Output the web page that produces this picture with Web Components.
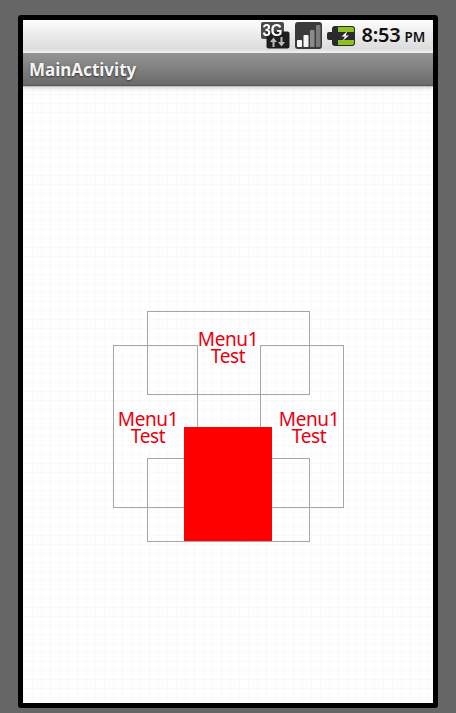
<!DOCTYPE html>
<html><head><meta charset="utf-8"><style>
html,body{margin:0;padding:0;background:#666;width:456px;height:713px;overflow:hidden}
</style></head><body>
<phone-frame>
  <status-bar slot="status"></status-bar>
  <title-bar slot="title">MainActivity</title-bar>
  <menu-canvas slot="content">
    <outline-box style="left:124px;top:226px;width:161px;height:82px"></outline-box>
    <outline-box style="left:90px;top:260px;width:83px;height:161px"></outline-box>
    <outline-box style="left:237px;top:260px;width:82px;height:161px"></outline-box>
    <outline-box style="left:124px;top:373px;width:161px;height:82px"></outline-box>
    <menu-label style="left:167px;top:246px">Menu1<br>Test</menu-label>
    <menu-label style="left:87px;top:326px">Menu1<br>Test</menu-label>
    <menu-label style="left:248px;top:326px">Menu1<br>Test</menu-label>
    <red-block style="left:161px;top:342px;width:88px;height:114px"></red-block>
  </menu-canvas>
</phone-frame>
<script>
function def(name, html){
  customElements.define(name, class extends HTMLElement{
    constructor(){super();this.attachShadow({mode:'open'}).innerHTML=html;}
  });
}
def('phone-frame',`<style>
:host{display:block;width:410px;height:683px;margin:15px 0 0 18px;border:5px solid #000;border-radius:3px;background:#fff;overflow:hidden}
.col{display:flex;flex-direction:column;height:100%}
.content{flex:1;position:relative;min-height:0}
</style><div class="col"><slot name="status"></slot><slot name="title"></slot><div class="content"><slot name="content"></slot></div></div>`);
def('status-bar',`<style>
:host{display:flex;box-sizing:border-box;height:33px;align-items:center;justify-content:flex-end;padding:0 8px 2px 0;background:linear-gradient(#fdfdfd 0,#efefef 35%,#dcdcdc 88%,#f4f4f4 100%);font-family:"Noto Sans","Open Sans",sans-serif;color:#111}
svg{display:block;flex:none;filter:blur(.35px)}
.time{font-size:20px;font-weight:600;margin-left:7px;line-height:26px;white-space:nowrap;letter-spacing:-.2px}
.pm{font-size:13.5px;margin-left:4px;font-weight:600}
</style>
<svg width="29" height="27" viewBox="0 0 29 27" style="margin-right:5px">
<rect x="0" y="0" width="23" height="17" rx="2" fill="#4a4a4a"/>
<rect x="5.5" y="9.5" width="23" height="17" rx="2" fill="#1e1e1e"/>
<text x="1.500" y="13.500" font-family="Liberation Sans" font-weight="700" font-size="17" fill="#fff" textLength="20" lengthAdjust="spacingAndGlyphs">3G</text>
<path d="M11.500 25v-5H9l3.500-4.500L16 20h-2.500v5zM19.500 15v5H17l3.500 4.500L24 20h-2.500v-5z" fill="#bbb"/>
</svg>
<svg width="27" height="27" viewBox="0 0 27 27" style="margin-right:5px">
<rect width="27" height="27" rx="3" fill="#3a3a3a"/>
<rect x="2" y="18" width="5" height="7" rx="1" fill="#fafafa"/>
<rect x="8.500" y="13" width="5" height="12" rx="1" fill="#f4f4f4"/>
<rect x="15" y="8" width="4.500" height="17" rx="1" fill="#8b8b8b"/>
<rect x="21" y="3" width="4.500" height="22" rx="1" fill="#7a7a7a"/>
</svg>
<svg width="28" height="20" viewBox="0 0 28 20">
<path d="M5 3a3 3 0 0 1 3-3h17a3 3 0 0 1 3 3v14a3 3 0 0 1-3 3H8a3 3 0 0 1-3-3v-3H2a2 2 0 0 1-2-2V8a2 2 0 0 1 2-2h3z" fill="#2a2a2a"/>
<path d="M11 1h14a2 2 0 0 1 2 2v3H11zM11 14h16v3a2 2 0 0 1-2 2H11z" fill="#8cc11f"/>
<path d="M20.500 5l-6 5.500h3.500l-2.500 4.500 6.500-5.500h-3.500z" fill="#fff"/>
</svg>
<span class="time">8:53<span class="pm">PM</span></span>`);
def('title-bar',`<style>
:host{display:flex;box-sizing:border-box;height:32px;align-items:center;padding:0 0 0 6px;background:linear-gradient(#949494,#6b6b6b);color:#f4f4f4;font-family:"Noto Sans","Open Sans",sans-serif;font-weight:700;font-size:17px;text-shadow:0 1px 2px #333;position:relative;z-index:1;box-shadow:0 1px 1px #555,0 3px 4px rgba(0,0,0,.18)}
</style><slot></slot>`);
def('menu-canvas',`<style>
:host{display:block;position:absolute;inset:0;background-color:#fefefe;background-image:linear-gradient(#f9f9f9 1px,transparent 1px),linear-gradient(90deg,#f9f9f9 1px,transparent 1px);background-size:9px 9px}
</style><slot></slot>`);
def('outline-box',`<style>
:host{display:block;position:absolute;box-sizing:content-box;border:1px solid #a6a6a6}
</style>`);
def('menu-label',`<style>
:host{display:block;position:absolute;width:76px;text-align:center;font-family:"Noto Sans","Open Sans",sans-serif;font-size:19px;letter-spacing:-.4px;line-height:17px;color:#e8000f}
</style><slot></slot>`);
def('red-block',`<style>
:host{display:block;position:absolute;background:#f00}
</style>`);
</script>
</body></html>
